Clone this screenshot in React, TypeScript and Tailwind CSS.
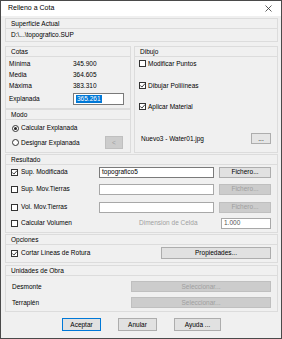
import React from "react";

// Relleno a Cota dialog (small scaled Windows dialog)

function Check({ checked }: { checked?: boolean }) {
  return (
    <span className="relative w-[7px] h-[7px] border border-[#333333] bg-white shrink-0">
      {checked && (
        <svg className="absolute left-[-1px] top-[-1px]" width="7" height="7" viewBox="0 0 7 7">
          <path d="M1.2 3.4 L2.9 5.1 L6 1.6" stroke="#222222" strokeWidth="0.9" fill="none" />
        </svg>
      )}
    </span>
  );
}

function Radio({ checked }: { checked?: boolean }) {
  return (
    <span className="w-[7px] h-[7px] rounded-full border border-[#333333] bg-white flex items-center justify-center shrink-0">
      {checked && <span className="w-[3px] h-[3px] rounded-full bg-[#222222]" />}
    </span>
  );
}

function Btn({
  children,
  disabled,
  primary,
  className = "",
}: {
  children?: React.ReactNode;
  disabled?: boolean;
  primary?: boolean;
  className?: string;
}) {
  const look = disabled
    ? "bg-[#cccccc] border-[#bfbfbf] text-[#9f9f9f]"
    : primary
    ? "bg-[#e1e1e1] border-[#0078d7] text-black"
    : "bg-[#e1e1e1] border-[#adadad] text-black";
  return (
    <div className={`flex items-center justify-center border shrink-0 ${look} ${className}`}>
      {children}
    </div>
  );
}

function Field({ children, disabled, className = "" }: { children?: React.ReactNode; disabled?: boolean; className?: string }) {
  return (
    <div
      className={`h-[11px] bg-white border flex items-center px-[2px] shrink-0 ${
        disabled ? "border-[#a8a8a8]" : "border-[#7a7a7a]"
      } ${className}`}
    >
      {children}
    </div>
  );
}

function Group({ title, className = "", children }: { title: string; className?: string; children?: React.ReactNode }) {
  return (
    <div className={`border border-[#dcdcdc] flex flex-col ${className}`}>
      <div className="h-[10px] leading-[10px] pl-[5px] border-b border-[#dcdcdc] shrink-0">{title}</div>
      {children}
    </div>
  );
}

export default function App() {
  return (
    <div className="w-[282px] h-[339px] border border-[#4a4a4a] bg-[#f0f0f0] flex flex-col text-[6.5px] text-black font-['Liberation_Sans',Arial,sans-serif] overflow-hidden">
      {/* Title bar */}
      <div className="h-[15px] bg-white flex items-center justify-between pl-[7px] pr-[9px] shrink-0">
        <span className="text-[7px]">Relleno a Cota</span>
        <svg width="7" height="7" viewBox="0 0 7 7">
          <path d="M0.5 0.5 L6.5 6.5 M6.5 0.5 L0.5 6.5" stroke="#333333" strokeWidth="0.8" />
        </svg>
      </div>

      <div className="flex-1 flex flex-col pt-[2px] pl-[4px] pr-[3px]">
        {/* Superficie Actual */}
        <Group title="Superficie Actual">
          <div className="h-[12px] flex items-center pl-[5px]">D:\...\topografico.SUP</div>
        </Group>

        <div className="mt-[4px] flex gap-[3px]">
          <div className="w-[126px] flex flex-col">
            <Group title="Cotas">
              <div className="flex flex-col pt-[1px] pb-[3px] pl-[3px]">
                <div className="h-[11px] flex items-center">
                  <span className="w-[64px]">Mínima</span>
                  <span>345.900</span>
                </div>
                <div className="h-[11px] flex items-center">
                  <span className="w-[64px]">Media</span>
                  <span>364.605</span>
                </div>
                <div className="h-[11px] flex items-center">
                  <span className="w-[64px]">Máxima</span>
                  <span>383.310</span>
                </div>
                <div className="mt-[2px] h-[12px] flex items-center">
                  <span className="w-[64px]">Explanada</span>
                  <Field className="w-[51px] h-[12px] px-[1px]">
                    <span className="bg-[#0078d7] text-white px-[1px] leading-[8px]">365.261</span>
                  </Field>
                </div>
              </div>
            </Group>
            <Group title="Modo">
              <div className="flex flex-col pt-[2px] pb-[3px] pl-[6px]">
                <div className="h-[12px] flex items-center gap-[2px]">
                  <Radio checked />
                  <span>Calcular Explanada</span>
                </div>
                <div className="mt-[2px] h-[13px] flex items-center">
                  <div className="flex items-center gap-[2px] w-[93px]">
                    <Radio />
                    <span>Designar Explanada</span>
                  </div>
                  <Btn disabled className="w-[18px] h-[13px]">
                    &lt;
                  </Btn>
                </div>
              </div>
            </Group>
          </div>

          <Group title="Dibujo" className="flex-1">
            <div className="flex flex-col pt-[1px] pl-[4px] pr-[6px]">
              <div className="h-[11px] flex items-center gap-[2px]">
                <Check />
                <span>Modificar Puntos</span>
              </div>
              <div className="mt-[11px] h-[11px] flex items-center gap-[2px]">
                <Check checked />
                <span>Dibujar Polilíneas</span>
              </div>
              <div className="mt-[10px] h-[11px] flex items-center gap-[2px]">
                <Check checked />
                <span>Aplicar Material</span>
              </div>
              <div className="mt-[21px] h-[11px] flex items-center justify-between">
                <span className="pl-[2px]">Nuevo3 - Water01.jpg</span>
                <Btn className="w-[20px] h-[11px] bg-[#e5e5e5] text-[#8a8a8a]">...</Btn>
              </div>
            </div>
          </Group>
        </div>

        {/* Resultado */}
        <Group title="Resultado" className="mt-[1px]">
          <div className="flex flex-col pt-[1px] pb-[3px] pl-[5px] pr-[6px]">
            <div className="h-[12px] flex items-center">
              <div className="w-[88px] flex items-center gap-[3px]">
                <Check checked />
                <span>Sup. Modificada</span>
              </div>
              <Field className="w-[115px]">topografico5</Field>
              <Btn className="ml-auto w-[52px] h-[11px]">Fichero...</Btn>
            </div>
            <div className="mt-[5px] h-[12px] flex items-center">
              <div className="w-[88px] flex items-center gap-[3px]">
                <Check />
                <span>Sup. Mov.Tierras</span>
              </div>
              <Field disabled className="w-[115px]" />
              <Btn disabled className="ml-auto w-[52px] h-[11px]">Fichero...</Btn>
            </div>
            <div className="mt-[6px] h-[12px] flex items-center">
              <div className="w-[88px] flex items-center gap-[3px]">
                <Check />
                <span>Vol. Mov.Tierras</span>
              </div>
              <Field disabled className="w-[115px]" />
              <Btn disabled className="ml-auto w-[52px] h-[11px]">Fichero...</Btn>
            </div>
            <div className="mt-[4px] h-[12px] flex items-center">
              <div className="w-[128px] flex items-center gap-[3px]">
                <Check />
                <span>Calcular Volumen</span>
              </div>
              <span className="text-[#9f9f9f]">Dimension de Celda</span>
              <Field disabled className="ml-auto w-[50px]">
                <span className="text-[#555555]">1.000</span>
              </Field>
            </div>
          </div>
        </Group>

        {/* Opciones */}
        <Group title="Opciones" className="mt-[1px]">
          <div className="flex pt-[2px] pb-[3px] pl-[5px] pr-[6px]">
            <div className="h-[12px] flex-1 flex items-center gap-[3px]">
              <Check checked />
              <span>Cortar Lineas de Rotura</span>
            </div>
            <Btn className="w-[110px] h-[12px]">Propiedades...</Btn>
          </div>
        </Group>

        {/* Unidades de Obra */}
        <Group title="Unidades de Obra" className="mt-[2px]">
          <div className="flex flex-col pt-[5px] pb-[3px] pl-[6px] pr-[6px]">
            <div className="h-[11px] flex items-center">
              <span className="w-[119px]">Desmonte</span>
              <Btn disabled className="flex-1 h-[11px]">Seleccionar...</Btn>
            </div>
            <div className="mt-[5px] h-[11px] flex items-center">
              <span className="w-[119px]">Terraplén</span>
              <Btn disabled className="flex-1 h-[11px]">Seleccionar...</Btn>
            </div>
          </div>
        </Group>

        {/* Dialog buttons */}
        <div className="mt-[6px] h-[13px] flex items-center pl-[57px] gap-[17px]">
          <Btn primary className="w-[39px] h-[13px]">Aceptar</Btn>
          <Btn className="w-[39px] h-[13px]">Anular</Btn>
          <Btn className="w-[47px] h-[13px]">Ayuda ...</Btn>
        </div>
      </div>
    </div>
  );
}
